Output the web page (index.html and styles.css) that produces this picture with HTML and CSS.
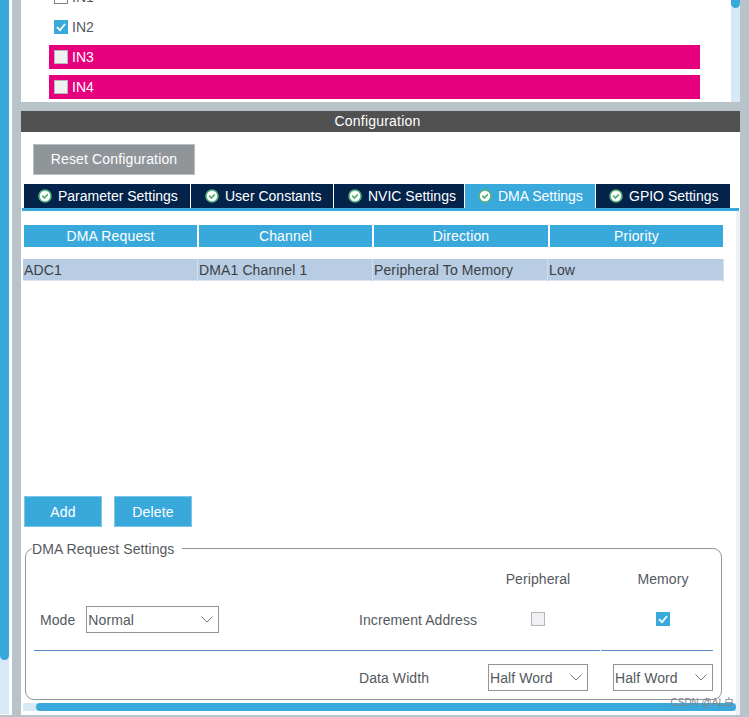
FILE: index.html
```html
<!DOCTYPE html>
<html lang="en">
<head>
<meta charset="utf-8">
<title>Configuration</title>
<link rel="stylesheet" href="styles.css">
</head>
<body>
<div class="app">
  <div class="side-scroll"><div class="side-thumb"></div></div>
  <div class="gutter"></div>
  <main class="main">
    <section class="top-panel">
      <div class="channels">
        <div class="channel clipped"><span class="box blank"></span><span>IN1</span></div>
        <div class="channel"><span class="box on"><svg viewBox="0 0 14 14"><path d="M3 7.2l3 3 5-6.2"/></svg></span><span>IN2</span></div>
        <div class="channel warn"><span class="box"></span><span>IN3</span></div>
        <div class="channel warn"><span class="box"></span><span>IN4</span></div>
      </div>
      <div class="top-scroll"><div class="top-thumb"></div></div>
    </section>
    <div class="divider"></div>
    <header class="config-bar">Configuration</header>
    <section class="config">
      <button class="reset">Reset Configuration</button>
      <nav class="tabs">
        <div class="tab t1"><svg class="ok" viewBox="0 0 14 14"><circle cx="7" cy="7" r="6"/><path d="M4.2 6.6l2.2 2.4 3.4-3.6"/></svg>Parameter Settings</div>
        <div class="tab t2"><svg class="ok" viewBox="0 0 14 14"><circle cx="7" cy="7" r="6"/><path d="M4.2 6.6l2.2 2.4 3.4-3.6"/></svg>User Constants</div>
        <div class="tab t3"><svg class="ok" viewBox="0 0 14 14"><circle cx="7" cy="7" r="6"/><path d="M4.2 6.6l2.2 2.4 3.4-3.6"/></svg>NVIC Settings</div>
        <div class="tab t4 active"><svg class="ok" viewBox="0 0 14 14"><circle cx="7" cy="7" r="6"/><path d="M4.2 6.6l2.2 2.4 3.4-3.6"/></svg>DMA Settings</div>
        <div class="tab t5"><svg class="ok" viewBox="0 0 14 14"><circle cx="7" cy="7" r="6"/><path d="M4.2 6.6l2.2 2.4 3.4-3.6"/></svg>GPIO Settings</div>
      </nav>
      <div class="table-head">
        <div>DMA Request</div><div>Channel</div><div>Direction</div><div>Priority</div>
      </div>
      <div class="table-row">
        <div>ADC1</div><div>DMA1 Channel 1</div><div>Peripheral To Memory</div><div>Low</div>
      </div>
      <div class="actions">
        <button class="action">Add</button>
        <button class="action">Delete</button>
      </div>
      <fieldset class="settings">
        <legend>DMA Request Settings</legend>
        <div class="grid">
          <div class="col-head c-per">Peripheral</div>
          <div class="col-head c-mem">Memory</div>
          <div class="mode">
            <span>Mode</span>
            <div class="select s-mode">Normal<svg viewBox="0 0 12 7"><path d="M.5.5L6 6l5.5-5.5"/></svg></div>
          </div>
          <div class="label l-inc">Increment Address</div>
          <div class="cell c-per r-inc"><span class="box"></span></div>
          <div class="cell c-mem r-inc"><span class="box on"><svg viewBox="0 0 14 14"><path d="M3 7.2l3 3 5-6.2"/></svg></span></div>
          <div class="rule r1"></div>
          <div class="rule r2"></div>
          <div class="label l-width">Data Width</div>
          <div class="cell c-per r-width"><div class="select s-half">Half Word<svg viewBox="0 0 12 7"><path d="M.5.5L6 6l5.5-5.5"/></svg></div></div>
          <div class="cell c-mem r-width"><div class="select s-half">Half Word<svg viewBox="0 0 12 7"><path d="M.5.5L6 6l5.5-5.5"/></svg></div></div>
        </div>
      </fieldset>
      <div class="watermark">CSDN @AL白</div>
    </section>
    <div class="h-scroll"><div class="h-thumb"></div></div>
    <div class="edge-strip"></div>
  </main>
  <div class="gutter"></div>
</div>
</body>
</html>
```
FILE: styles.css
```css
* { box-sizing: border-box; }
html, body { margin: 0; padding: 0; }
body {
  width: 749px;
  height: 717px;
  overflow: hidden;
  background: #fff;
  font-family: "Liberation Sans", Arial, sans-serif;
  font-size: 14px;
  letter-spacing: .2px;
  color: #55595e;
}
.app { display: flex; height: 717px; border-bottom: 2px solid #b9c4ca; }
.side-scroll { width: 9px; margin-right: 3px; background: #d7e8f7; height: 714px; }
.side-thumb { height: 660px; background: #39a9dc; border-radius: 0 0 5px 5px; }
.gutter { width: 9px; background: #b9c4ca; }
.main { position: relative; width: 719px; display: flex; flex-direction: column; }

.top-panel { height: 102px; display: flex; justify-content: space-between; overflow: hidden; }
.channels { margin-left: 28px; margin-top: -15px; width: 651px; }
.channel {
  height: 24px;
  margin-bottom: 6px;
  display: flex;
  align-items: center;
  gap: 4px;
  padding-left: 5px;
  letter-spacing: 0;
}
.warn { background: #e6007e; color: #fff; }
.box {
  width: 14px;
  height: 14px;
  display: block;
  flex: none;
  background: #eff1f2;
  border: 1px solid #b3b7bb;
}
.box.blank { background: #fff; border-color: #7d8084; }
.box.on { background: #39a9dc; border-color: #39a9dc; }
.box svg { display: block; width: 14px; height: 14px; margin: -1px; fill: none; stroke: #fff; stroke-width: 1.8; }
.top-scroll { width: 9px; background: #d7e8f7; }
.top-thumb { height: 8px; background: #39a9dc; border-radius: 0 0 5px 5px; }

.divider { height: 9px; background: #b9c4ca; }
.config-bar {
  height: 21px;
  line-height: 21px;
  padding-right: 6px;
  background: #515151;
  color: #fff;
  text-align: center;
  flex: none;
}
.config { position: relative; height: 571px; flex: none; padding: 12px 0 0 0; }
.reset {
  display: block;
  margin-left: 12px;
  width: 162px;
  height: 31px;
  padding: 0 0 1px;
  border: 1px solid #b9bfc3;
  background: #90959a;
  color: #fff;
  font: inherit;
  letter-spacing: .15px;
}
.tabs {
  margin: 9px 0 0 1px;
  width: 717px;
  height: 27px;
  padding-left: 2px;
  display: flex;
  gap: 1px;
  border-bottom: 3px solid #39a9dc;
}
.tab {
  height: 24px;
  padding-left: 14px;
  background: #03234b;
  color: #fff;
  display: flex;
  align-items: center;
  gap: 6px;
  letter-spacing: 0;
}
.tab.active { background: #39a9dc; padding-left: 13px; }
.t1 { width: 166px; }
.t2 { width: 142px; }
.t3 { width: 130px; }
.t4 { width: 130px; }
.t5 { width: 134px; padding-left: 13px; }
.ok { width: 14px; height: 14px; flex: none; }
.ok circle { fill: #fff; stroke: #56b278; stroke-width: 1.6; }
.ok path { fill: none; stroke: #4fae6f; stroke-width: 1.6; }

.table-head {
  margin: 14px 0 0 3px;
  width: 699px;
  display: grid;
  grid-template-columns: 173px 173px 174px 173px;
  column-gap: 2px;
  letter-spacing: .15px;
}
.table-head div {
  height: 22px;
  line-height: 22px;
  background: #39a9dc;
  color: #fff;
  text-align: center;
}
.table-row {
  margin: 12px 0 0 2px;
  width: 701px;
  height: 22px;
  display: grid;
  grid-template-columns: 175px 175px 175px 176px;
  background: #b8cde4;
  border-bottom: 1px solid #dde6f0;
  color: #3b3f44;
  letter-spacing: .12px;
}
.table-row div { line-height: 23px; padding-left: 1px; border-right: 1px solid #d5e0ec; }
.actions { margin: 215px 0 0 3px; display: flex; gap: 12px; }
.action {
  width: 78px;
  height: 31px;
  padding: 0;
  border: 1px solid #7cc6e8;
  background: #39a9dc;
  color: #fff;
  font: inherit;
  letter-spacing: .2px;
}
.settings {
  margin: 12px 0 0 4px;
  padding: 0;
  width: 697px;
  height: 161px;
  border: 1px solid #90959a;
  border-radius: 9px;
  min-width: 0;
  letter-spacing: .08px;
}
.settings legend { margin-left: 6px; padding: 2px 8px 0 0; line-height: 16px; }
.grid {
  display: grid;
  grid-template-columns: 333px 129px 125px 100px;
  grid-template-rows: 27px 14px 27px 31px 27px;
  margin-top: 8px;
}
.grid > * { min-width: 0; }
.col-head { text-align: center; align-self: center; grid-row: 1; }
.c-per { grid-column: 3; width: 100px; }
.c-mem { grid-column: 4; }
.mode { grid-column: 1; grid-row: 3; display: flex; align-items: center; padding-left: 14px; gap: 11px; }
.label { align-self: center; grid-column: 2 / 4; }
.l-inc, .r-inc { grid-row: 3; }
.r-inc { padding-bottom: 1px; }
.l-width, .r-width { grid-row: 5; }
.select {
  height: 27px;
  border: 1px solid #90959a;
  padding-left: 1px;
  line-height: 27px;
  position: relative;
  background: #fff;
}
.select svg {
  position: absolute;
  right: 5px;
  top: 9px;
  width: 12px;
  height: 7px;
  fill: none;
  stroke: #70757a;
}
.s-mode { width: 133px; }
.s-half { width: 100px; }
.cell { display: flex; align-items: center; justify-content: center; }
.rule { height: 1px; background: #5c86c4; grid-row: 4; align-self: start; margin-top: 17px; }
.r1 { grid-column: 1 / 4; margin-left: 8px; margin-right: 13px; }
.r2 { grid-column: 4; margin-left: -12px; }
.watermark {
  position: absolute;
  right: 6px;
  bottom: -6px;
  font-family: "Liberation Sans", "Noto Sans CJK SC", sans-serif;
  font-size: 10px;
  letter-spacing: 0;
  color: #7f8489;
}
.h-scroll { height: 8px; margin-left: 2px; margin-right: 4px; background: #d7e8f7; flex: none; }
.h-thumb { height: 8px; margin-left: 13px; background: #39a9dc; border-radius: 5px; }
.edge-strip { position: absolute; top: 211px; right: 0; bottom: 0; width: 4px; background: #eef1f3; }
```
